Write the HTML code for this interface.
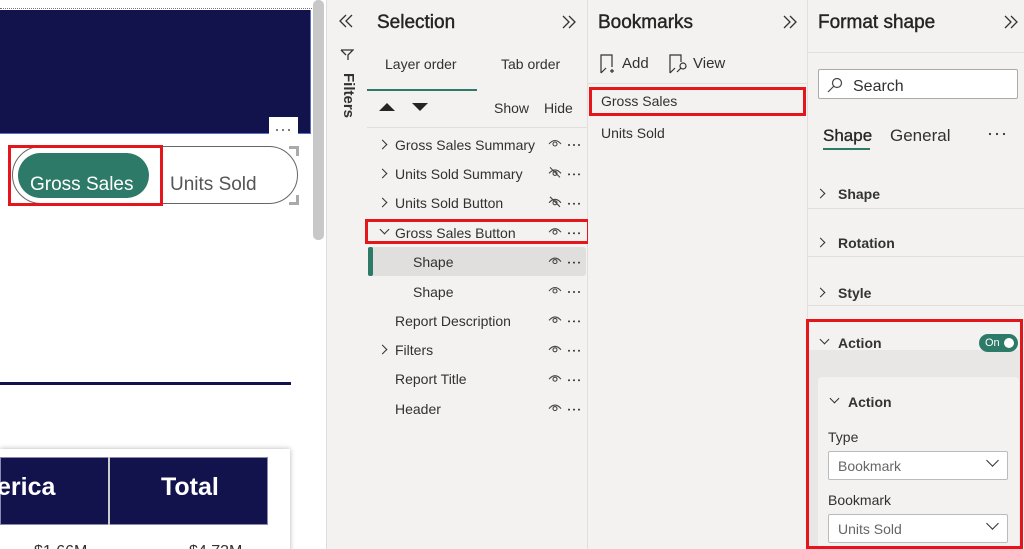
<!DOCTYPE html>
<html><head><meta charset="utf-8"><style>
*{margin:0;padding:0;box-sizing:border-box}
html,body{width:1024px;height:549px;overflow:hidden}
body{position:relative;background:#fff;font-family:"Liberation Sans",sans-serif;color:#252423}
.a{position:absolute}
.t{position:absolute;white-space:nowrap;font-size:14px;color:#323130;line-height:16px}
.h{font-size:19px;color:#252423;-webkit-text-stroke:0.4px #252423;line-height:22px}
.chev{position:absolute;width:7px;height:7px;border-right:1.3px solid #323130;border-bottom:1.3px solid #323130}
.r{transform:rotate(-45deg)}
.d{transform:rotate(45deg)}
</style></head><body>
<!-- canvas -->
<div class="a" style="left:0;top:8px;width:312px;border-top:1px dotted #777"></div>
<div class="a" style="left:0;top:10px;width:311px;height:124px;background:#12124d;border-right:1px solid #5a6fc0;border-bottom:1px solid #5a6fc0"></div>
<div class="a" style="left:269px;top:117px;width:29px;height:17px;background:#fff"></div>
<svg class="a" style="left:274px;top:128px" width="20" height="4"><g fill="#555"><circle cx="3" cy="2" r="1"/><circle cx="9" cy="2" r="1"/><circle cx="15" cy="2" r="1"/></g></svg>
<div class="a" style="left:12px;top:146px;width:286px;height:58px;border:1.3px solid #666;border-radius:29px;background:#fff"></div>
<div class="a" style="left:18px;top:153px;width:131px;height:45px;border-radius:23px;background:#2d7a68"></div>
<div class="t" style="left:30px;top:174px;font-size:19px;color:#fff;line-height:22px">Gross Sales</div>
<div class="t" style="left:170px;top:174px;font-size:19px;color:#555;line-height:22px">Units Sold</div>
<div class="a" style="left:289px;top:146px;width:10px;height:10px;border-top:3px solid #aaa;border-right:3px solid #aaa"></div>
<div class="a" style="left:289px;top:195px;width:10px;height:10px;border-bottom:3px solid #aaa;border-right:3px solid #aaa"></div>
<div class="a" style="left:8px;top:145px;width:155px;height:61px;border:3px solid #e4161b"></div>
<div class="a" style="left:0;top:382px;width:291px;height:3px;background:#12124d"></div>
<div class="a" style="left:0;top:449px;width:290px;height:110px;background:#fff;box-shadow:0 0 5px rgba(0,0,0,.3)"></div>
<div class="a" style="left:0;top:457px;width:268px;height:68px;background:#12124d;border:1px solid #8a8ab0"></div>
<div class="a" style="left:108px;top:457px;width:2px;height:68px;background:#ccc"></div>
<div class="t" style="left:-3px;top:473px;font-size:25px;font-weight:bold;color:#fff;line-height:28px">erica</div>
<div class="t" style="left:161px;top:473px;font-size:25px;font-weight:bold;color:#fff;line-height:28px">Total</div>
<div class="t" style="left:34px;top:544px;font-size:16px;color:#333">$1.66M</div>
<div class="t" style="left:189px;top:544px;font-size:16px;color:#333">$4.73M</div>
<div class="a" style="left:313px;top:0;width:11px;height:240px;background:#c8c8c8;border-radius:5px"></div>
<!-- filters strip -->
<div class="a" style="left:326px;top:0;width:41px;height:549px;background:#f3f2f1;border-left:1px solid #ddd"></div>
<svg class="a" style="left:338px;top:14px" width="16" height="14"><path d="M8 1 L2 7 L8 13 M14 1 L8 7 L14 13" stroke="#333" fill="none" stroke-width="1.3"/></svg>
<svg class="a" style="left:340px;top:48px" width="14" height="14"><path d="M1 2 L13 2 L8 7 L8 12 M1 2 L6 7" stroke="#333" fill="none" stroke-width="1.3"/></svg>
<div class="t" style="left:336px;top:73px;font-size:15px;font-weight:bold;transform-origin:0 0;transform:translate(20px,0) rotate(90deg)">Filters</div>
<!-- selection -->
<div class="a" style="left:367px;top:0;width:221px;height:549px;background:#f3f2f1;border-right:1px solid #e1dfdd"></div>
<div class="t h" style="left:377px;top:12px">Selection</div>
<svg class="a" style="left:561px;top:15px" width="16" height="14"><path d="M2 1 L8 7 L2 13 M8 1 L14 7 L8 13" stroke="#333" fill="none" stroke-width="1.3"/></svg>
<div class="t" style="left:385px;top:56px">Layer order</div>
<div class="t" style="left:501px;top:56px">Tab order</div>
<div class="a" style="left:367px;top:89px;width:110px;height:2px;background:#2d7a68"></div>
<svg class="a" style="left:379px;top:102px" width="50" height="10"><path d="M0 9 L8 1 L16 9Z M33 1 L49 1 L41 9Z" fill="#252423"/></svg>
<div class="t" style="left:494px;top:100px">Show</div>
<div class="t" style="left:544px;top:100px">Hide</div>
<div class="a" style="left:367px;top:127px;width:220px;height:1px;background:#e1dfdd"></div>
<div class="a" style="left:368px;top:247px;width:218px;height:29px;background:#e1dfdd;border-radius:3px"></div>
<div class="a" style="left:368px;top:247px;width:5px;height:29px;background:#2d7a68;border-radius:2px"></div>
<div class="a" style="left:365px;top:219px;width:225px;height:25px;border:3px solid #e4161b"></div>
<!-- bookmarks -->
<div class="a" style="left:588px;top:0;width:220px;height:549px;background:#f3f2f1;border-right:1px solid #e1dfdd"></div>
<div class="t h" style="left:598px;top:12px">Bookmarks</div>
<svg class="a" style="left:782px;top:15px" width="16" height="14"><path d="M2 1 L8 7 L2 13 M8 1 L14 7 L8 13" stroke="#333" fill="none" stroke-width="1.3"/></svg>
<svg class="a" style="left:600px;top:54px" width="16" height="20"><path d="M1 19 V1 H12 V13 M1 19 L6 14 M12 15 V19 M10 17 H14" stroke="#333" fill="none" stroke-width="1.2"/></svg>
<div class="t" style="left:622px;top:56px;font-size:15px">Add</div>
<svg class="a" style="left:669px;top:54px" width="20" height="20"><path d="M1 19 V1 H12 V8 M1 19 L6 14" stroke="#333" fill="none" stroke-width="1.2"/><circle cx="14" cy="12" r="3" stroke="#333" fill="none" stroke-width="1.2"/><path d="M12 14 L8 18" stroke="#333" stroke-width="1.2"/></svg>
<div class="t" style="left:693px;top:56px;font-size:15px">View</div>
<div class="a" style="left:588px;top:83px;width:219px;height:1px;background:#e1dfdd"></div>
<div class="a" style="left:589px;top:87px;width:217px;height:29px;border:3px solid #e4161b"></div>
<div class="t" style="left:601px;top:93px">Gross Sales</div>
<div class="t" style="left:601px;top:125px">Units Sold</div>
<!-- format -->
<div class="a" style="left:808px;top:0;width:216px;height:549px;background:#f3f2f1"></div>
<div class="t h" style="left:818px;top:12px">Format shape</div>
<svg class="a" style="left:1003px;top:15px" width="16" height="14"><path d="M2 1 L8 7 L2 13 M8 1 L14 7 L8 13" stroke="#333" fill="none" stroke-width="1.3"/></svg>
<div class="a" style="left:808px;top:52px;width:216px;height:1px;background:#e1dfdd"></div>
<div class="a" style="left:818px;top:69px;width:200px;height:30px;background:#fff;border:1px solid #aaa;border-radius:2px"></div>
<svg class="a" style="left:827px;top:77px" width="16" height="16"><circle cx="10" cy="6" r="4.5" stroke="#444" fill="none" stroke-width="1.2"/><path d="M7 9 L1 15" stroke="#444" stroke-width="1.2"/></svg>
<div class="t" style="left:853px;top:78px;font-size:16px;line-height:18px">Search</div>
<div class="t" style="left:823px;top:126px;font-size:17px;line-height:19px;color:#252423;-webkit-text-stroke:0.3px #252423">Shape</div>
<div class="a" style="left:823px;top:148px;width:47px;height:2px;background:#2d7a68"></div>
<div class="t" style="left:890px;top:126px;font-size:17px;line-height:19px">General</div>
<svg class="a" style="left:988px;top:132px" width="20" height="4"><g fill="#333"><circle cx="2" cy="2" r="1.1"/><circle cx="9" cy="2" r="1.1"/><circle cx="16" cy="2" r="1.1"/></g></svg>
<div class="chev r" style="left:817px;top:190px"></div><div class="t" style="left:838px;top:186px;font-weight:bold;color:#333">Shape</div>
<div class="a" style="left:808px;top:208px;width:216px;height:1px;background:#e1dfdd"></div>
<div class="chev r" style="left:817px;top:239px"></div><div class="t" style="left:838px;top:235px;font-weight:bold;color:#333">Rotation</div>
<div class="a" style="left:808px;top:256px;width:216px;height:1px;background:#e1dfdd"></div>
<div class="chev r" style="left:817px;top:289px"></div><div class="t" style="left:838px;top:285px;font-weight:bold;color:#333">Style</div>
<div class="a" style="left:808px;top:305px;width:216px;height:1px;background:#e1dfdd"></div>
<div class="a" style="left:808px;top:350px;width:214px;height:199px;background:#e8e7e6"></div>
<div class="a" style="left:818px;top:377px;width:201px;height:172px;background:#f3f2f1;border-radius:4px"></div>
<div class="chev d" style="left:821px;top:336px"></div><div class="t" style="left:838px;top:335px;font-weight:bold;color:#333">Action</div>
<div class="a" style="left:979px;top:334px;width:39px;height:18px;background:#2d7a68;border-radius:9px"></div>
<div class="t" style="left:985px;top:336px;font-size:11px;color:#fff;line-height:14px">On</div>
<div class="a" style="left:1004px;top:338px;width:10px;height:10px;background:#fff;border-radius:5px"></div>
<div class="chev d" style="left:831px;top:395px"></div><div class="t" style="left:848px;top:394px;font-weight:bold;color:#333">Action</div>
<div class="t" style="left:828px;top:429px">Type</div>
<div class="a" style="left:828px;top:451px;width:180px;height:29px;background:#fff;border:1px solid #bbb;border-radius:2px"></div>
<div class="t" style="left:838px;top:458px;color:#666">Bookmark</div>
<div class="chev d" style="left:988px;top:456px;width:9px;height:9px"></div>
<div class="t" style="left:828px;top:492px">Bookmark</div>
<div class="a" style="left:828px;top:514px;width:180px;height:29px;background:#fff;border:1px solid #bbb;border-radius:2px"></div>
<div class="t" style="left:838px;top:521px;color:#666">Units Sold</div>
<div class="chev d" style="left:988px;top:519px;width:9px;height:9px"></div>
<div class="a" style="left:806px;top:319px;width:217px;height:230px;border:3px solid #e4161b"></div>

<!-- selection rows -->
<div class="chev r" style="left:379px;top:141px"></div><div class="t" style="left:395px;top:137px">Gross Sales Summary</div>
<div class="chev r" style="left:379px;top:170px"></div><div class="t" style="left:395px;top:166px">Units Sold Summary</div>
<div class="chev r" style="left:379px;top:199px"></div><div class="t" style="left:395px;top:195px">Units Sold Button</div>
<div class="chev d" style="left:381px;top:226px"></div><div class="t" style="left:395px;top:225px">Gross Sales Button</div>
<div class="t" style="left:413px;top:254px">Shape</div>
<div class="t" style="left:413px;top:284px">Shape</div>
<div class="t" style="left:395px;top:313px">Report Description</div>
<div class="chev r" style="left:379px;top:346px"></div><div class="t" style="left:395px;top:342px">Filters</div>
<div class="t" style="left:395px;top:371px">Report Title</div>
<div class="t" style="left:395px;top:401px">Header</div>
<svg class="a" style="left:548px;top:136px" width="40" height="290">
<g stroke="#444" fill="none" stroke-width="1.1">
<g id="e"><path d="M1 8 Q7 1 13 8"/><circle cx="7" cy="8" r="2"/></g>
<g transform="translate(0,29.4)"><path d="M1 8 Q7 1 13 8"/><circle cx="7" cy="8" r="2"/><path d="M2 2 L12 12"/></g>
<g transform="translate(0,58.8)"><path d="M1 8 Q7 1 13 8"/><circle cx="7" cy="8" r="2"/><path d="M2 2 L12 12"/></g>
<use href="#e" y="88.2"/><use href="#e" y="117.6"/><use href="#e" y="147"/><use href="#e" y="176.4"/><use href="#e" y="205.8"/><use href="#e" y="235.2"/><use href="#e" y="264.6"/>
</g>
<g fill="#333"><g id="dd"><circle cx="21" cy="9" r="1"/><circle cx="26" cy="9" r="1"/><circle cx="31" cy="9" r="1"/></g>
<use href="#dd" y="29.4"/><use href="#dd" y="58.8"/><use href="#dd" y="88.2"/><use href="#dd" y="117.6"/><use href="#dd" y="147"/><use href="#dd" y="176.4"/><use href="#dd" y="205.8"/><use href="#dd" y="235.2"/><use href="#dd" y="264.6"/></g>
</svg>
</body></html>
